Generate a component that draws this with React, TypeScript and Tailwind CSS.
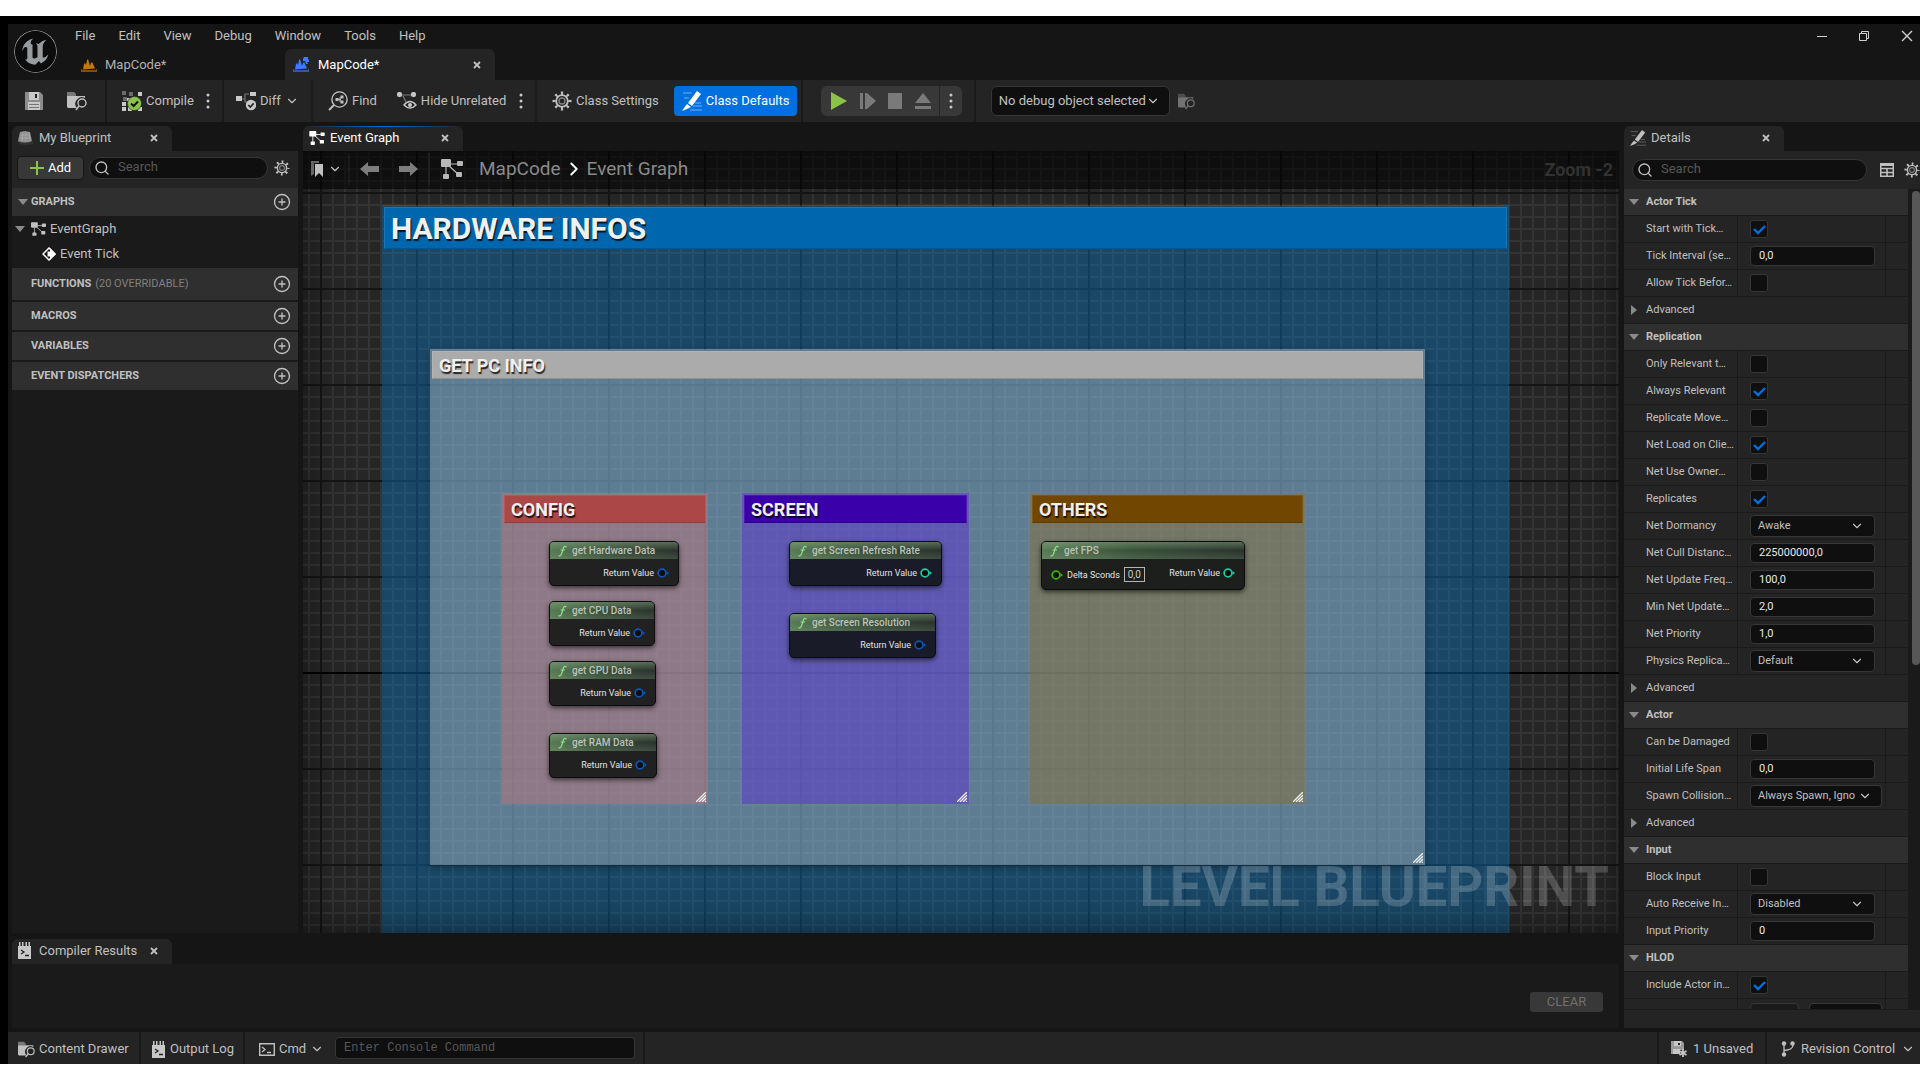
import { ReactNode } from "react";
import { ChevronDown, ChevronRight, CirclePlus, Search } from "lucide-react";
import { SiUnrealengine } from "react-icons/si";
import { clsx } from "clsx";

type IconProps = { className?: string };

/* ---------- icons ---------- */

function GearIcon({ className = "size-5" }: IconProps) {
  return (
    <svg viewBox="0 0 20 20" fill="none" stroke="currentColor" className={className}>
      <circle cx="10" cy="10" r="7.8" strokeWidth="3.4" pathLength={16} strokeDasharray="0.7 1.3" strokeDashoffset="0.35" />
      <circle cx="10" cy="10" r="5.8" strokeWidth="1.8" />
      <circle cx="10" cy="10" r="3" strokeWidth="1.4" opacity="0.6" />
    </svg>
  );
}

function GraphIcon({ className = "size-4" }: IconProps) {
  return (
    <svg viewBox="0 0 22 20" fill="currentColor" className={className}>
      <path d="M5 6v10M7 6l10 9M8 5h8" stroke="currentColor" strokeWidth="1.2" fill="none" />
      <rect x="0" y="0" width="10" height="8" rx="1.2" />
      <rect x="16" y="2" width="6" height="5" rx="1" />
      <rect x="2" y="15" width="6" height="5" rx="1" />
      <rect x="15" y="13" width="6" height="5" rx="1" />
    </svg>
  );
}

function MapIcon({ level }: { level?: boolean }) {
  return (
    <svg viewBox="0 0 16 16" fill="currentColor" className="size-4">
      <path d="M2 12.500 3 7l1-1 1 2 1-5 1-1 2 7 1-3 1-1 1 2 2 4.500z" />
      <path d="M0 12h1v1h14v-1h1v3H0z" opacity="0.6" />
      {level && <path d="M11 0h4v2l1 1v2h-2l1 2h-2l-1-3h-2V2z" />}
    </svg>
  );
}

function SaveIcon({ className = "size-[18px]" }: IconProps) {
  return (
    <svg viewBox="0 0 18 18" className={className}>
      <path d="M0 0h15l3 3v15H0z" fill="#8c8c8c" />
      <path d="M4 0h10v8H4z" fill="#c8c8c8" />
      <path d="M10 2h2v4h-2z" fill="#242424" />
      <path d="M3 10h12v8H3z" fill="#c8c8c8" />
      <path d="M4 12h10v1H4zM4 15h10v1H4z" fill="#777" />
    </svg>
  );
}

function BrowseIcon({ className = "size-5" }: IconProps) {
  return (
    <svg viewBox="0 0 20 18" className={className}>
      <path d="M0 0h7l2 2v2H0z" fill="#777" />
      <path d="M0 4h18v2a6.500 6.500 0 0 0-8 10H1L0 15z" fill="#c0c0c0" />
      <circle cx="15" cy="11" r="4" fill="none" stroke="#c0c0c0" strokeWidth="1.4" />
      <path d="m12 14-3 4" stroke="#c0c0c0" strokeWidth="1.6" />
    </svg>
  );
}

function CompileIcon() {
  return (
    <svg viewBox="0 0 20 20" className="size-5">
      <path d="M0 0h4v4H0zM7 1h4v4H7zM1 6h4v4H1z" fill="#6b6b6b" />
      <path d="M16 1h4v4h-4zM0 11h4v4H0zM0 16h4v4H0zM6 16h4v4H6zM16 16h4v4h-4zM5 7h4v3H5z" fill="#c8c8c8" />
      <circle cx="12.5" cy="12.5" r="7" fill="#8bc34a" stroke="#242424" strokeWidth="0.6" />
      <path d="m9 12.5 2.6 2.5 4.4-4.5" fill="none" stroke="#111" strokeWidth="2" />
    </svg>
  );
}

function DiffIcon() {
  return (
    <svg viewBox="0 0 20 20" className="size-5">
      <path d="M5 8h4V3h4M9 8v3h2" fill="none" stroke="#777" strokeWidth="1.2" />
      <path d="M0 5h6v5H0zM14 1h6v4h-6z" fill="#c8c8c8" />
      <circle cx="15" cy="14" r="5.2" fill="#c8c8c8" />
      <path d="m12.3 14 2 2 3.4-3.6" fill="none" stroke="#242424" strokeWidth="1.6" />
    </svg>
  );
}

function FindIcon() {
  return (
    <svg viewBox="0 0 20 20" fill="none" stroke="#c0c0c0" className="size-5">
      <circle cx="11.5" cy="8.5" r="7.6" strokeWidth="1.4" />
      <path d="m6 14-5 5" strokeWidth="2" />
      <path d="M10 8.500h3M12 6v5" />
      <path d="M7.500 7h3v3h-3zM12.500 4.500h3v3h-3zM12.500 9.500h3v3h-3z" fill="#c0c0c0" stroke="none" />
    </svg>
  );
}

function HideIcon() {
  return (
    <svg viewBox="0 0 20 18" className="size-5">
      <path d="M3 3h12M6 4l3 6" stroke="#777" strokeWidth="1.2" />
      <rect x="0" y="0" width="5" height="5" rx="2" fill="#c8c8c8" />
      <rect x="14" y="0" width="5" height="5" rx="2" fill="#c8c8c8" />
      <path d="M7 13q6-7 12 0-6 6-12 0z" fill="none" stroke="#c8c8c8" strokeWidth="1.4" />
      <circle cx="13" cy="13" r="2" fill="#c8c8c8" />
    </svg>
  );
}

function PencilIcon({ className = "size-5" }: IconProps) {
  return (
    <svg viewBox="0 0 20 20" className={className}>
      <path d="M1 2h9M2 7h5M13 12h6M11 15h9M8 19h12" stroke="currentColor" strokeWidth="1" opacity="0.45" />
      <path d="M15 0l4 3-9 12-4-3z" fill="currentColor" />
      <path d="m5 13 4 3-4 2-5 2 2-3z" fill="currentColor" />
    </svg>
  );
}

function LogIcon() {
  return (
    <svg viewBox="0 0 13 17" className="h-[17px] w-[13px]">
      <path d="M0 4h13v13H0zM1 0h1.500v5H1zM4 0h1.500v5H4zM7.500 0H9v5H7.500zM10.500 0H12v5h-1.500z" fill="#c8c8c8" />
      <path d="m3 8 3 2-3 2M7 13.500h4" fill="none" stroke="#222" strokeWidth="1.3" />
    </svg>
  );
}

function BlueprintIcon() {
  return (
    <svg viewBox="0 0 16 14" className="h-3.5 w-4">
      <path d="m2 1 5-1 5 1 2 9-3 2-8 1-3-3z" fill="#8f8f8f" />
      <path d="M1 10q4 3 14 0v3q-6 2-13 0z" fill="#333" />
      <path d="M5 1 4 10M8 1v10M11 1l1 9M2 4h10M2 7h11" stroke="#b5b5b5" strokeWidth="0.6" />
    </svg>
  );
}

function DotsIcon() {
  return (
    <svg viewBox="0 0 4 16" fill="#c8c8c8" className="h-4 w-1">
      <circle cx="2" cy="2" r="1.5" />
      <circle cx="2" cy="8" r="1.5" />
      <circle cx="2" cy="14" r="1.5" />
    </svg>
  );
}

function CloseIcon({ className = "size-2" }: IconProps) {
  return (
    <svg viewBox="0 0 8 8" stroke="currentColor" strokeWidth="1.8" className={className}>
      <path d="m1 1 6 6M7 1 1 7" />
    </svg>
  );
}

function ArrowIcon({ className }: IconProps) {
  return (
    <svg viewBox="0 0 19 14" fill="#7d7d7d" className={clsx("h-3.5 w-[19px]", className)}>
      <path d="M8 0v4h11v6H8v4L0 7z" />
    </svg>
  );
}

function Triangle({ open = true }: { open?: boolean }) {
  return (
    <svg viewBox="0 0 10 10" fill="#8a8a8a" className="size-2.5">
      <path d={open ? "M0 2h10L5 8z" : "M2 0v10l6-5z"} />
    </svg>
  );
}

/* ---------- shared pieces ---------- */

interface PanelTabProps {
  icon: ReactNode;
  title: string;
  active?: boolean;
}

function PanelTab({ icon, title, active }: PanelTabProps) {
  return (
    <div
      className={clsx(
        "relative flex h-[25px] w-40 shrink-0 items-center rounded-t-md bg-[#242424] pr-3.5 pb-0.5 pl-1.5 text-[13px]",
        active ? "text-white" : "text-[#c0c0c0]"
      )}
    >
      {active && (
        <span className="absolute inset-x-1 top-0 h-px bg-linear-to-r from-transparent via-[#0070e0] to-transparent" />
      )}
      <span className="flex w-[21px] items-center">{icon}</span>
      <span className="flex-1">{title}</span>
      <button aria-label={`Close ${title}`} className="text-[#c0c0c0]">
        <CloseIcon />
      </button>
    </div>
  );
}

function SearchBox({ id, className }: { id: string; className?: string }) {
  return (
    <label
      htmlFor={id}
      className={clsx(
        "flex h-[22px] items-center gap-2 rounded-full border border-[#363636] bg-[#0f0f0f] px-1",
        className
      )}
    >
      <Search className="size-4 shrink-0 text-[#c0c0c0]" />
      <input
        id={id}
        aria-label="Search"
        placeholder="Search"
        className="w-full min-w-0 bg-transparent pb-0.5 text-[13px] leading-4 outline-none placeholder:text-[#575757]"
      />
    </label>
  );
}

function Divider() {
  return <span className="h-full w-0.5 shrink-0 bg-[#1a1a1a]" />;
}

/* ---------- title bar ---------- */

function TitleBar() {
  return (
    <header className="flex h-14 shrink-0">
      <div className="flex w-[59px] shrink-0 items-center pb-0.5 pl-1.5">
        <SiUnrealengine className="size-[43px] rounded-full bg-[#0c0c0c] text-[#999c9e]" />
      </div>
      <div className="flex flex-1 flex-col justify-between">
        <nav className="flex h-6 items-center gap-[23px] pl-2 text-[13px] text-[#c0c0c0]">
          {["File", "Edit", "View", "Debug", "Window", "Tools", "Help"].map((item) => (
            <button key={item}>{item}</button>
          ))}
        </nav>
        <div className="flex gap-2 pl-1.5 text-[13px]">
          <div className="flex h-[31px] w-[204px] items-center gap-2 pl-2 text-[#b0b0b0]">
            <span className="text-[#c27a0e]">
              <MapIcon />
            </span>
            MapCode*
          </div>
          <div className="flex h-[31px] w-[210px] items-center gap-[9px] rounded-t-md bg-[#242424] pr-3.5 pl-2 text-white">
            <span className="text-[#3d7bff]">
              <MapIcon level />
            </span>
            <span className="flex-1">MapCode*</span>
            <button aria-label="Close MapCode" className="text-[#c0c0c0]">
              <CloseIcon />
            </button>
          </div>
        </div>
      </div>
      <div className="flex h-6 items-center gap-8 pr-[7px] text-[#d0d0d0]">
        <button aria-label="Minimize" className="h-px w-2.5 bg-[#d0d0d0]" />
        <button aria-label="Restore">
          <svg viewBox="0 0 10 10" fill="none" stroke="currentColor" className="size-2.5">
            <path d="M.5 2.500h7v7h-7zM2.500 2.500v-2h7v7h-2" />
          </svg>
        </button>
        <button aria-label="Close window">
          <svg viewBox="0 0 12 12" stroke="currentColor" strokeWidth="1.4" className="size-3">
            <path d="m1 1 10 10M11 1 1 11" />
          </svg>
        </button>
      </div>
    </header>
  );
}

/* ---------- main toolbar ---------- */

function Toolbar() {
  return (
    <div className="flex h-[42px] shrink-0 items-center bg-[#242424] text-[13px] text-[#c0c0c0]">
      <div className="flex w-[97px] items-center gap-6 pl-[17px]">
        <button aria-label="Save"><SaveIcon /></button>
        <button aria-label="Browse"><BrowseIcon /></button>
      </div>
      <Divider />
      <div className="flex w-[115px] items-center pl-[15px]">
        <button className="flex items-center gap-1"><CompileIcon />Compile</button>
        <button aria-label="Compile options" className="ml-3"><DotsIcon /></button>
      </div>
      <Divider />
      <button className="flex w-[87px] items-center gap-1 pl-3">
        <DiffIcon />Diff<ChevronDown className="size-3.5" />
      </button>
      <Divider />
      <div className="flex w-[222px] items-center pl-[15px]">
        <button className="flex items-center gap-1"><FindIcon />Find</button>
        <button className="ml-5 flex items-center gap-1"><HideIcon />Hide Unrelated</button>
        <button aria-label="Hide options" className="ml-[13px]"><DotsIcon /></button>
      </div>
      <Divider />
      <button className="ml-[15px] flex items-center gap-1"><GearIcon />Class Settings</button>
      <button className="mr-1 ml-[15px] flex h-[30px] w-[123px] items-center gap-1 rounded bg-[#0070e0] pl-2 text-white">
        <PencilIcon />Class Defaults
      </button>
      <Divider />
      <div className="mr-3 ml-[18px] flex h-[30px] items-center rounded-md bg-[#383838]">
        <button aria-label="Play" className="pr-[13px] pl-2.5">
          <svg viewBox="0 0 16 18" fill="#8bc34a" className="h-[18px] w-4"><path d="M0 0v18l16-9z" /></svg>
        </button>
        <button aria-label="Step" className="pr-3">
          <svg viewBox="0 0 16 16" fill="#7a7a7a" className="size-4"><path d="M0 0h3v16H0zM5 0h2v16H5zM7 0v16l9-8z" /></svg>
        </button>
        <button aria-label="Stop" className="mr-[13px] h-4 w-3.5 bg-[#7a7a7a]" />
        <button aria-label="Eject" className="pr-2">
          <svg viewBox="0 0 16 16" fill="#7a7a7a" className="size-4"><path d="M0 10 8 0l8 10zM0 13h16v3H0z" /></svg>
        </button>
        <span className="h-full w-px bg-[#242424]" />
        <button aria-label="Play options" className="px-[9px]"><DotsIcon /></button>
      </div>
      <Divider />
      <div className="relative ml-[15px]">
        <select
          aria-label="Debug object"
          className="h-[30px] w-[179px] appearance-none rounded-md border border-[#363636] bg-[#0f0f0f] pl-[7px] text-[13px]"
        >
          <option>No debug object selected</option>
        </select>
        <ChevronDown className="pointer-events-none absolute top-2 right-2.5 size-3.5" />
      </div>
      <button aria-label="Find debug object" className="ml-2 opacity-50"><BrowseIcon className="size-[17px]" /></button>
    </div>
  );
}

/* ---------- my blueprint ---------- */

function BlueprintSection({ title, note, open, tall }: { title: string; note?: string; open?: boolean; tall?: boolean }) {
  return (
    <div
      className={clsx(
        "flex items-center bg-[#2f2f2f] pr-[7px] pl-1.5 text-[11px] text-[#c0c0c0]",
        tall ? "h-8" : "h-7"
      )}
    >
      <span className="w-[13px]">{open && <Triangle />}</span>
      <span className="font-bold">{title}</span>
      {note && <span className="ml-1 text-[#808080]">{note}</span>}
      <button aria-label={`Add ${title.toLowerCase()}`} className="ml-auto">
        <CirclePlus className="size-[18px]" strokeWidth={1.8} />
      </button>
    </div>
  );
}

function MyBlueprint() {
  return (
    <aside className="flex w-[286px] shrink-0 flex-col">
      <PanelTab icon={<BlueprintIcon />} title="My Blueprint" />
      <div className="flex h-[37px] items-center bg-[#242424] pr-2 pb-1 pl-[5px]">
        <button className="flex h-6 w-[67px] items-center justify-center gap-1 rounded border border-[#151515] bg-[#383838] text-[13px] text-white">
          <svg viewBox="0 0 14 14" stroke="#8bc34a" strokeWidth="2" className="size-3.5">
            <path d="M7 0v14M0 7h14" />
          </svg>
          Add
        </button>
        <SearchBox id="blueprint-search" className="mr-1.5 ml-[5px] flex-1" />
        <button aria-label="Blueprint settings" className="text-[#c0c0c0]"><GearIcon className="size-4" /></button>
      </div>
      <div className="flex flex-1 flex-col gap-0.5 bg-[#1a1a1a]">
        <div>
          <BlueprintSection title="GRAPHS" open />
          <ul className="h-[50px] text-[13px] text-[#c0c0c0]">
            <li className="flex h-[26px] items-center pl-[3px]">
              <Triangle />
              <span className="mr-1 ml-1.5"><GraphIcon className="h-3.5 w-[15px]" /></span>
              EventGraph
            </li>
            <li className="flex h-6 items-center gap-1 pl-[30px]">
              <svg viewBox="0 0 14 14" className="size-3.5">
                <path d="m7 1 6 6-6 6-6-6z" fill="#111" stroke="#fff" strokeWidth="1.5" />
                <path d="M8 1v3.500H5.500v5H8V13l6-6z" fill="#fff" />
              </svg>
              <span>Event Tick</span>
            </li>
          </ul>
        </div>
        <BlueprintSection title="FUNCTIONS" note="(20 OVERRIDABLE)" tall />
        <BlueprintSection title="MACROS" />
        <BlueprintSection title="VARIABLES" />
        <BlueprintSection title="EVENT DISPATCHERS" />
      </div>
    </aside>
  );
}

/* ---------- event graph ---------- */

interface GraphComment {
  title: string;
  box: { left: number; top: number; width: number; height: number };
  body: string;
  header: string;
  large?: boolean;
}

const comments: GraphComment[] = [
  {
    title: "HARDWARE INFOS",
    box: { left: 79, top: 54, width: 1127, height: 900 },
    body: "bg-[rgba(10,123,198,0.4)]",
    header: "bg-[#0066ad]",
    large: true,
  },
  {
    title: "GET PC INFO",
    box: { left: 127, top: 198, width: 995, height: 516 },
    body: "bg-[rgba(200,208,214,0.4)] shadow-[0_2px_6px_rgba(0,0,0,0.35)]",
    header: "bg-[#ababab]",
  },
  {
    title: "CONFIG",
    box: { left: 199, top: 342, width: 206, height: 311 },
    body: "bg-[rgba(213,115,119,0.4)]",
    header: "bg-[#ab4747]",
  },
  {
    title: "SCREEN",
    box: { left: 439, top: 342, width: 227, height: 311 },
    body: "bg-[rgba(96,32,227,0.4)]",
    header: "bg-[#3a00a9]",
  },
  {
    title: "OTHERS",
    box: { left: 727, top: 342, width: 275, height: 311 },
    body: "bg-[rgba(148,110,35,0.4)]",
    header: "bg-[#714600]",
  },
];

interface GraphNode {
  title: string;
  box: { left: number; top: number; width: number };
  pin: string;
  tint: string;
  hasInput?: boolean;
}

const BLUE_PIN = "text-[#0a56b8]";
const TEAL_PIN = "text-[#1fc9a0]";
const GREY = "bg-[#212121]";
const NAVY = "bg-[#1a1b29]";

const nodes: GraphNode[] = [
  { title: "get Hardware Data", box: { left: 246, top: 390, width: 130 }, pin: BLUE_PIN, tint: GREY },
  { title: "get CPU Data", box: { left: 246, top: 450, width: 106 }, pin: BLUE_PIN, tint: GREY },
  { title: "get GPU Data", box: { left: 246, top: 510, width: 107 }, pin: BLUE_PIN, tint: GREY },
  { title: "get RAM Data", box: { left: 246, top: 582, width: 108 }, pin: BLUE_PIN, tint: GREY },
  { title: "get Screen Refresh Rate", box: { left: 486, top: 390, width: 153 }, pin: TEAL_PIN, tint: NAVY },
  { title: "get Screen Resolution", box: { left: 486, top: 462, width: 147 }, pin: BLUE_PIN, tint: NAVY },
  { title: "get FPS", box: { left: 738, top: 390, width: 204 }, pin: TEAL_PIN, tint: "bg-[#1c1f1b]", hasInput: true },
];

function Pin({ color }: { color: string }) {
  return (
    <svg viewBox="0 0 12 10" className={clsx("h-2.5 w-3", color)}>
      <circle cx="5" cy="5" r="3.9" fill="#0c0c0c" stroke="currentColor" strokeWidth="1.7" />
      <path d="m9.500 3 2.500 2-2.500 2z" fill="currentColor" />
    </svg>
  );
}

function CommentBox({ comment }: { comment: GraphComment }) {
  return (
    <section style={comment.box} className={clsx("absolute px-0.5 pt-0.5", comment.body)}>
      <h2
        className={clsx(
          "flex items-center border border-white/10 border-b-black/15 pt-0.5 pl-1.5 font-bold text-[#f0f0f0] [text-shadow:1px_2px_1px_rgba(0,0,0,0.8)]",
          comment.large ? "h-[42px] text-[30px] leading-8" : "h-7 text-[18px] leading-5",
          comment.header
        )}
      >
        {comment.title}
      </h2>
      <svg viewBox="0 0 10 10" stroke="#f0f0f0" strokeWidth="1.3" className="absolute right-0.5 bottom-0.5 size-2.5">
        <path d="M0 10 10 0M3 10l7-7M6 10l4-4M9 10l1-1" />
      </svg>
    </section>
  );
}

function NodeBox({ node }: { node: GraphNode }) {
  return (
    <article
      style={node.box}
      className={clsx(
        "absolute overflow-hidden rounded-[5px] border border-[#0c0c0c] shadow-[0_2px_5px_rgba(0,0,0,0.6)]",
        node.tint,
        node.hasInput ? "h-[49px]" : "h-[45px]"
      )}
    >
      <h3 className="flex h-[17px] items-center bg-[linear-gradient(to_bottom,rgba(140,180,135,0.45),transparent_50%,rgba(140,180,135,0.2)),linear-gradient(to_right,#587a55,#3a4f3a_45%,#2b322e)] pl-2 text-[10px] leading-3 font-medium text-[#bcc2bc]">
        <svg viewBox="0 0 9 12" fill="none" stroke="#90e090" strokeWidth="1.2" className="mr-[5px] h-3 w-[9px]">
          <path d="M8.500 2Q6 0 5 4T3 10q-1 1.500-2.500.5M2.500 5H7" />
        </svg>
        {node.title}
      </h3>
      <div className="flex items-start justify-end gap-[3px] pt-2 pr-[9px] text-[9px] leading-3 text-[#e4e4e4]">
        {node.hasInput && (
          <div className="mr-auto flex items-center gap-1 pl-[9px]">
            <Pin color="text-[#35b800]" />
            <label htmlFor="delta-sconds">Delta Sconds</label>
            <input
              id="delta-sconds"
              defaultValue="0,0"
              className="h-[15px] w-[21px] border border-[#b5b5b5] bg-transparent text-center text-[10px] text-[#c8c8c8]"
            />
          </div>
        )}
        <span>Return Value</span>
        <span className="pt-px">
          <Pin color={node.pin} />
        </span>
      </div>
    </article>
  );
}

function GraphHeader() {
  return (
    <div className="absolute inset-x-0 top-0 flex h-[38px] items-center bg-black/55 pr-1.5 pb-0.5 text-[19px] text-[#8a8a8a]">
      <button aria-label="Bookmarks" className="flex items-center gap-[5px] pl-2 text-[#c0c0c0]">
        <svg viewBox="0 0 12 16" fill="currentColor" className="h-4 w-3">
          <path d="M0 0h8v2H3v11l-3 2z" opacity="0.5" />
          <path d="M4 3h8v13l-4-4-4 4z" />
        </svg>
        <ChevronDown className="size-3.5" />
      </button>
      <span className="mr-2.5 ml-1.5 h-8 w-0.5 bg-white/5" />
      <button aria-label="Back"><ArrowIcon /></button>
      <button aria-label="Forward" className="ml-5"><ArrowIcon className="rotate-180" /></button>
      <span className="mr-[11px] ml-2.5 h-8 w-0.5 bg-white/5" />
      <GraphIcon className="h-5 w-[22px] text-[#b8b8b8]" />
      <span className="ml-4">MapCode</span>
      <ChevronRight className="mx-0.5 text-white" size={22} strokeWidth={2} />
      <span>Event Graph</span>
      <span className="ml-auto text-[18px] font-bold text-[#323232]">Zoom -2</span>
    </div>
  );
}

function EventGraph() {
  return (
    <main className="flex min-w-0 flex-1 flex-col">
      <PanelTab icon={<GraphIcon className="h-3.5 w-4" />} title="Event Graph" active />
      <div className="relative flex-1 overflow-hidden bg-[#262626] bg-[linear-gradient(to_right,#151515_2px,transparent_2px),linear-gradient(to_bottom,#151515_2px,transparent_2px),linear-gradient(to_right,#343434_2px,transparent_2px),linear-gradient(to_bottom,#343434_2px,transparent_2px)] bg-[length:96px_96px,96px_96px,12px_12px,12px_12px] bg-[position:17px_41px,17px_41px,5px_5px,5px_5px]">
        {/* world origin axis */}
        <div className="absolute inset-x-0 top-[521px] h-0.5 bg-black" />
        {comments.map((comment) => (
          <CommentBox key={comment.title} comment={comment} />
        ))}
        {nodes.map((node) => (
          <NodeBox key={node.title} node={node} />
        ))}
        <p className="pointer-events-none absolute right-2.5 bottom-3.5 text-[56px] leading-[64px] font-bold text-white/20">
          LEVEL BLUEPRINT
        </p>
        <div className="pointer-events-none absolute inset-0 shadow-[inset_0_0_40px_rgba(0,0,0,0.5)]" />
        <GraphHeader />
      </div>
    </main>
  );
}

/* ---------- details ---------- */

type Field =
  | { kind: "check"; label: string; checked?: boolean }
  | { kind: "text"; label: string; value: string }
  | { kind: "select"; label: string; value: string; wide?: boolean };

interface Category {
  title: string;
  fields: Field[];
  advanced?: boolean;
}

const categories: Category[] = [
  {
    title: "Actor Tick",
    advanced: true,
    fields: [
      { kind: "check", label: "Start with Tick…", checked: true },
      { kind: "text", label: "Tick Interval (se…", value: "0,0" },
      { kind: "check", label: "Allow Tick Befor…" },
    ],
  },
  {
    title: "Replication",
    advanced: true,
    fields: [
      { kind: "check", label: "Only Relevant t…" },
      { kind: "check", label: "Always Relevant", checked: true },
      { kind: "check", label: "Replicate Move…" },
      { kind: "check", label: "Net Load on Clie…", checked: true },
      { kind: "check", label: "Net Use Owner…" },
      { kind: "check", label: "Replicates", checked: true },
      { kind: "select", label: "Net Dormancy", value: "Awake" },
      { kind: "text", label: "Net Cull Distanc…", value: "225000000,0" },
      { kind: "text", label: "Net Update Freq…", value: "100,0" },
      { kind: "text", label: "Min Net Update…", value: "2,0" },
      { kind: "text", label: "Net Priority", value: "1,0" },
      { kind: "select", label: "Physics Replica…", value: "Default" },
    ],
  },
  {
    title: "Actor",
    advanced: true,
    fields: [
      { kind: "check", label: "Can be Damaged" },
      { kind: "text", label: "Initial Life Span", value: "0,0" },
      { kind: "select", label: "Spawn Collision…", value: "Always Spawn, Ignore Collisions", wide: true },
    ],
  },
  {
    title: "Input",
    fields: [
      { kind: "check", label: "Block Input" },
      { kind: "select", label: "Auto Receive In…", value: "Disabled" },
      { kind: "text", label: "Input Priority", value: "0" },
    ],
  },
  {
    title: "HLOD",
    fields: [{ kind: "check", label: "Include Actor in…", checked: true }],
  },
];

function FieldControl({ id, field }: { id: string; field: Field }) {
  if (field.kind === "check") {
    return (
      <span className="relative flex">
        <input
          id={id}
          type="checkbox"
          defaultChecked={field.checked}
          className="peer size-[18px] appearance-none rounded-[3px] border border-[#363636] bg-[#0f0f0f]"
        />
        <svg
          viewBox="0 0 18 18"
          fill="none"
          stroke="#0070e0"
          strokeWidth="2.4"
          className="pointer-events-none absolute inset-0 hidden size-[18px] peer-checked:block"
        >
          <path d="m4 9 4 4 7-7" />
        </svg>
      </span>
    );
  }
  if (field.kind === "text") {
    return (
      <input
        id={id}
        defaultValue={field.value}
        className="h-5 w-[125px] rounded border border-[#363636] bg-[#0f0f0f] px-2 pb-0.5 text-[11px] text-[#e8e8e8]"
      />
    );
  }
  return (
    <span className="relative flex">
      <select
        id={id}
        className={clsx(
          "h-[22px] appearance-none rounded border border-[#363636] bg-[#0f0f0f] pr-[26px] pl-[7px] text-[11px] text-[#c0c0c0]",
          field.wide ? "w-[132px]" : "w-[125px]"
        )}
      >
        <option>{field.value}</option>
      </select>
      <ChevronDown
        className={clsx("pointer-events-none absolute top-1 size-3.5", field.wide ? "right-2.5" : "right-[11px]")}
      />
    </span>
  );
}

const ROW = "h-[27px] border-b border-[#1a1a1a]";

function Details() {
  return (
    <aside className="flex w-[296px] shrink-0 flex-col text-[11px] text-[#c0c0c0]">
      <PanelTab icon={<PencilIcon className="size-4" />} title="Details" />
      <div className="flex h-[38px] shrink-0 items-center overflow-hidden bg-[#242424] pl-2">
        <SearchBox id="details-search" className="mr-[13px] flex-1" />
        <button aria-label="Property matrix">
          <svg viewBox="0 0 14 14" fill="none" stroke="currentColor" className="size-3.5">
            <path d="M.7.7h12.600v12.600H.7zM.7 5.500h12.600M.7 9.500h12.600M7 5v8" strokeWidth="1.6" />
            <path d="M1 2h12" strokeWidth="2" />
          </svg>
        </button>
        <button aria-label="Details settings" className="ml-2.5"><GearIcon className="size-4" /></button>
      </div>
      <div className="flex min-h-0 flex-1">
        <div className="flex-1 overflow-hidden bg-[#242424]">
          {categories.map((category) => (
            <section key={category.title}>
              <h3 className={clsx(ROW, "flex items-center gap-[7px] bg-[#2f2f2f] pl-[5px] font-bold")}>
                <Triangle />
                {category.title}
              </h3>
              {category.fields.map((field) => {
                const id = `${category.title}-${field.label}`.replace(/\W+/g, "-");
                return (
                  <div key={id} className={clsx(ROW, "grid grid-cols-[113px_1fr_22px]")}>
                    <label htmlFor={id} className="self-center pl-[22px] whitespace-nowrap">
                      {field.label}
                    </label>
                    <div className="flex items-center border-x border-[#1a1a1a] pl-3">
                      <FieldControl id={id} field={field} />
                    </div>
                  </div>
                );
              })}
              {category.advanced && (
                <button className={clsx(ROW, "flex w-full items-center gap-[7px] pl-[5px]")}>
                  <Triangle open={false} />
                  Advanced
                </button>
              )}
            </section>
          ))}
          <div className={clsx(ROW, "grid grid-cols-[113px_1fr_22px]")}>
            <span />
            <div className="flex items-start gap-2.5 border-x border-[#1a1a1a] pt-1 pl-3">
              <span className="h-5 w-[49px] rounded border border-[#363636] bg-[#1a1a1a]" />
              <span className="h-5 w-[73px] rounded border border-[#363636] bg-[#0f0f0f]" />
            </div>
            <span />
          </div>
        </div>
        <div className="flex w-3 flex-col items-end bg-[#1a1a1a] pt-0.5">
          <span className="h-[58%] w-2 rounded-full bg-[#575757]" />
        </div>
      </div>
      <div className="h-[19px] shrink-0 border-t border-[#1a1a1a] bg-[#242424]" />
    </aside>
  );
}

/* ---------- bottom ---------- */

function CompilerResults() {
  return (
    <section className="mt-1.5 shrink-0">
      <PanelTab icon={<LogIcon />} title="Compiler Results" />
      <div className="flex h-16 items-start justify-end bg-[#1a1a1a] pt-7 pr-4">
        <button disabled className="h-5 w-[73px] rounded-[3px] bg-[#383838] text-[13px] leading-5 text-[#707070]">
          CLEAR
        </button>
      </div>
    </section>
  );
}

function StatusBar() {
  return (
    <footer className="mt-1 flex h-8 shrink-0 items-center bg-[#242424] text-[13px] text-[#c0c0c0]">
      <button className="flex w-[131px] items-center gap-1 pt-0.5 pl-2.5"><BrowseIcon className="size-[17px]" />Content Drawer</button>
      <Divider />
      <button className="flex w-[102px] items-center gap-[5px] pt-0.5 pl-[11px]"><LogIcon />Output Log</button>
      <Divider />
      <button className="flex w-[90px] items-center gap-1 pt-0.5 pl-3.5">
        <svg viewBox="0 0 16 13" fill="none" stroke="currentColor" className="h-[13px] w-4">
          <path d="M.7.7h14.600v11.600H.7z" strokeWidth="1.4" />
          <path d="m3 4 3 2.500L3 9M8 9.500h4" strokeWidth="1.3" />
        </svg>
        Cmd
        <ChevronDown className="size-3.5" />
      </button>
      <input
        aria-label="Console command"
        placeholder="Enter Console Command"
        className="mr-2 h-[22px] w-[300px] rounded border border-[#363636] bg-[#0f0f0f] px-2 font-['Liberation_Mono',monospace] text-[12px] placeholder:text-[#575757]"
      />
      <Divider />
      <span className="flex-1" />
      <Divider />
      <button className="flex w-[106px] items-center gap-1.5 pt-0.5 pl-3">
        <svg viewBox="0 0 16 16" className="size-4">
          <path d="M0 0h11l2 2v7H9v4H0z" fill="#9a9a9a" />
          <path d="M3 0h7v5H3zM2 8h7v5H2z" fill="#c8c8c8" />
          <path d="M7 2h2v2H7z" fill="#242424" />
          <path d="M12 8v8M8.500 10l7 4M15.500 10l-7 4" stroke="#c8c8c8" strokeWidth="1.7" />
        </svg>
        1 Unsaved
      </button>
      <Divider />
      <button className="flex w-[153px] items-center gap-1.5 pt-0.5 pl-3.5">
        <svg viewBox="0 0 14 16" fill="none" stroke="currentColor" className="h-4 w-3.5">
          <path d="M3 3v10M12 4q0 5-9 5.500" strokeWidth="1.3" />
          <circle cx="3" cy="2.500" r="2.200" fill="currentColor" stroke="none" />
          <circle cx="11.500" cy="2.500" r="2.200" fill="currentColor" stroke="none" />
          <circle cx="3" cy="13.500" r="2.200" fill="currentColor" stroke="none" />
        </svg>
        <span>Revision Control</span>
        <ChevronDown className="size-3.5" />
      </button>
    </footer>
  );
}

export default function App() {
  return (
    <div className="flex h-screen flex-col bg-white py-4 font-[Roboto,sans-serif]">
      <div className="flex min-h-0 flex-1 flex-col bg-black pt-2 pl-2">
        <div className="flex min-h-0 flex-1 flex-col bg-[#151515]">
          <TitleBar />
          <Toolbar />
          <div className="flex min-h-0 flex-1 gap-[5px] pt-1 pl-1">
            <div className="flex min-w-0 flex-1 flex-col">
              <div className="flex min-h-0 flex-1 gap-[5px]">
                <MyBlueprint />
                <EventGraph />
              </div>
              <CompilerResults />
            </div>
            <Details />
          </div>
          <StatusBar />
        </div>
      </div>
    </div>
  );
}
